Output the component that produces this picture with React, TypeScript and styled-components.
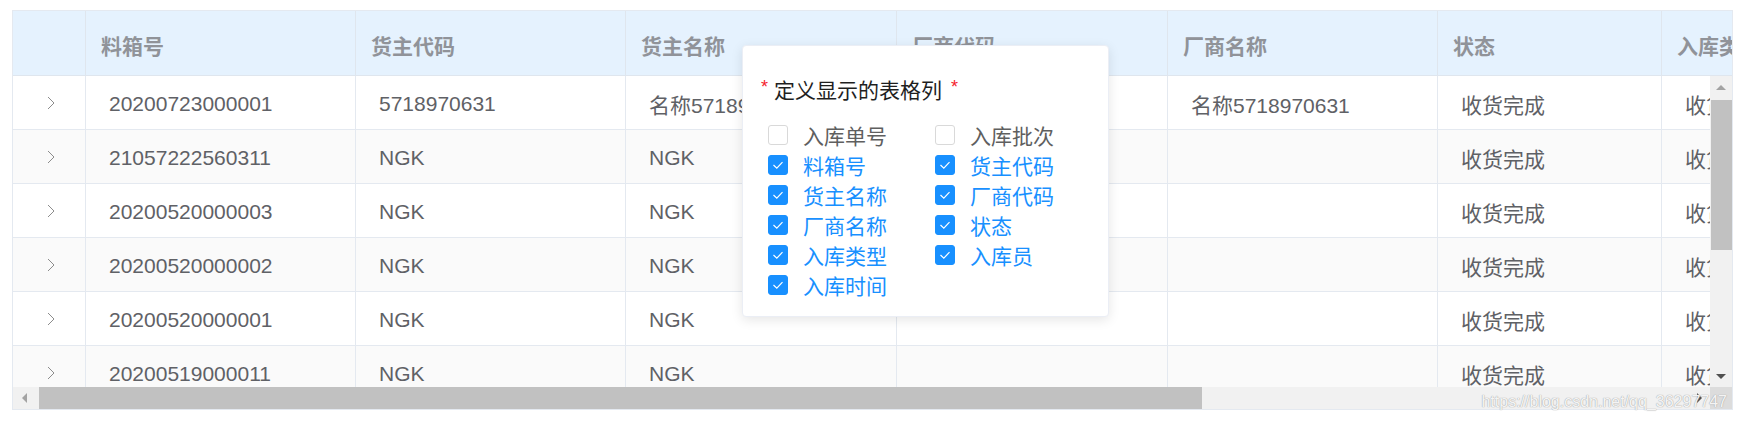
import React from "react";
import styled, { createGlobalStyle } from "styled-components";

type Column = { key: string; title: string; width: number };
type RowData = Record<string, string>;

const columns: Column[] = [
  { key: "box", title: "料箱号", width: 270 },
  { key: "ownerCode", title: "货主代码", width: 270 },
  { key: "ownerName", title: "货主名称", width: 271 },
  { key: "vendorCode", title: "厂商代码", width: 271 },
  { key: "vendorName", title: "厂商名称", width: 270 },
  { key: "status", title: "状态", width: 224 },
  { key: "type", title: "入库类型", width: 270 },
  { key: "user", title: "入库员", width: 200 },
  { key: "time", title: "入库时间", width: 260 },
];

const rows: RowData[] = [
  {
    box: "20200723000001",
    ownerCode: "5718970631",
    ownerName: "名称5718970631",
    vendorCode: "5718970631",
    vendorName: "名称5718970631",
    status: "收货完成",
    type: "收货入库",
  },
  { box: "21057222560311", ownerCode: "NGK", ownerName: "NGK", status: "收货完成", type: "收货入库" },
  { box: "20200520000003", ownerCode: "NGK", ownerName: "NGK", status: "收货完成", type: "收货入库" },
  { box: "20200520000002", ownerCode: "NGK", ownerName: "NGK", status: "收货完成", type: "收货入库" },
  { box: "20200520000001", ownerCode: "NGK", ownerName: "NGK", status: "收货完成", type: "收货入库" },
  { box: "20200519000011", ownerCode: "NGK", ownerName: "NGK", status: "收货完成", type: "收货入库" },
];

const options = [
  { label: "入库单号", checked: false },
  { label: "入库批次", checked: false },
  { label: "料箱号", checked: true },
  { label: "货主代码", checked: true },
  { label: "货主名称", checked: true },
  { label: "厂商代码", checked: true },
  { label: "厂商名称", checked: true },
  { label: "状态", checked: true },
  { label: "入库类型", checked: true },
  { label: "入库员", checked: true },
  { label: "入库时间", checked: true },
];

const App = () => {
  return (
    <Page>
      <GlobalStyle />
      <TableFrame>
        <HeaderRow>
          <ExpandHead />
          {columns.map((col) => (
            <HeadCell key={col.key} w={col.width}>
              {col.title}
            </HeadCell>
          ))}
        </HeaderRow>

        <BodyArea>
          <BodyViewport>
            {rows.map((row, i) => (
              <BodyRow key={row.box} striped={i % 2 === 1}>
                <ExpandCell>
                  <svg width="8" height="14" viewBox="0 0 8 14">
                    <polyline
                      points="1,1 7,7 1,13"
                      fill="none"
                      stroke="#8c8c8c"
                      strokeWidth="1"
                    />
                  </svg>
                </ExpandCell>
                {columns.map((col) => (
                  <Cell key={col.key} w={col.width}>
                    {row[col.key] || ""}
                  </Cell>
                ))}
              </BodyRow>
            ))}
          </BodyViewport>

          {/* 세로 스크롤바 */}
          <VScroll>
            <ScrollBtn>
              <Arrow dir="up" active={false} />
            </ScrollBtn>
            <VThumb />
            <ScrollTrack />
            <ScrollBtn>
              <Arrow dir="down" active />
            </ScrollBtn>
          </VScroll>
        </BodyArea>

        {/* 가로 스크롤바 */}
        <HScroll>
          <ScrollBtn>
            <Arrow dir="left" active={false} />
          </ScrollBtn>
          <HThumb />
          <ScrollTrack />
          <ScrollBtn>
            <Arrow dir="right" active />
          </ScrollBtn>
          <ScrollCorner />
        </HScroll>
      </TableFrame>

      <Popover>
        <PopTitle>
          <Star>*</Star>定义显示的表格列<Star second>*</Star>
        </PopTitle>
        <OptionGrid>
          {options.map((opt) => (
            <OptionItem key={opt.label} checked={opt.checked}>
              <CheckBox checked={opt.checked}>
                {opt.checked ? (
                  <svg width="20" height="20" viewBox="0 0 20 20">
                    <polyline
                      points="5.5,10 8.8,13.2 14.5,7.2"
                      fill="none"
                      stroke="#fff"
                      strokeWidth="1.2"
                    />
                  </svg>
                ) : null}
              </CheckBox>
              {opt.label}
            </OptionItem>
          ))}
        </OptionGrid>
      </Popover>

      <Watermark>https://blog.csdn.net/qq_36297747</Watermark>
    </Page>
  );
};

export default App;

const GlobalStyle = createGlobalStyle`
  html, body {
    margin: 0;
    padding: 0;
    background: #fff;
  }
  body {
    font-family: "Liberation Sans", "Noto Sans CJK SC", sans-serif;
  }
  * {
    box-sizing: border-box;
  }
`;

const Page = styled.div`
  position: relative;
  width: 1740px;
  height: 421px;
  padding: 10px 0 0 12px;
  overflow: hidden;
`;

const TableFrame = styled.div`
  width: 1721px;
  height: 400px;
  border: 1px solid #e4e9f0;
  display: flex;
  flex-direction: column;
  overflow: hidden;
  background: #fff;
`;

const HeaderRow = styled.div`
  display: flex;
  flex-shrink: 0;
  height: 65px;
  background: #e5f2fe;
  border-bottom: 1px solid #dfe6ee;
`;

const ExpandHead = styled.div`
  width: 73px;
  flex-shrink: 0;
  border-right: 1px solid #dfe6ee;
`;

const HeadCell = styled.div<{ w: number }>`
  width: ${(p) => p.w}px;
  flex-shrink: 0;
  display: flex;
  align-items: center;
  padding: 3px 0 0 15px;
  border-right: 1px solid #dfe6ee;
  font-size: 21px;
  font-weight: bold;
  color: #909399;
  white-space: nowrap;
  overflow: hidden;
`;

const BodyArea = styled.div`
  display: flex;
  height: 311px;
  flex-shrink: 0;
`;

const BodyViewport = styled.div`
  flex: 1;
  overflow: hidden;
`;

const BodyRow = styled.div<{ striped: boolean }>`
  display: flex;
  height: 54px;
  background: ${(p) => (p.striped ? "#fafafa" : "#fff")};
  border-bottom: 1px solid #e4e9f0;
`;

const ExpandCell = styled.div`
  width: 73px;
  flex-shrink: 0;
  display: flex;
  align-items: center;
  justify-content: center;
  padding-left: 4px;
  border-right: 1px solid #e4e9f0;
`;

const Cell = styled.div<{ w: number }>`
  width: ${(p) => p.w}px;
  flex-shrink: 0;
  display: flex;
  align-items: center;
  padding: 2px 0 0 23px;
  border-right: 1px solid #e4e9f0;
  font-size: 21px;
  color: #5f6166;
  white-space: nowrap;
  overflow: hidden;
`;

const VScroll = styled.div`
  width: 22px;
  flex-shrink: 0;
  display: flex;
  flex-direction: column;
  background: #f1f1f1;
`;

const HScroll = styled.div`
  display: flex;
  height: 22px;
  flex-shrink: 0;
  background: #f1f1f1;
`;

const ScrollBtn = styled.div`
  width: 22px;
  height: 22px;
  flex-shrink: 0;
  display: flex;
  align-items: center;
  justify-content: center;
`;

const ScrollTrack = styled.div`
  flex: 1;
`;

const VThumb = styled.div`
  height: 150px;
  margin: 2px 0 0 1px;
  width: 21px;
  background: #c1c1c1;
`;

const HThumb = styled.div`
  width: 1163px;
  margin-left: 4px;
  background: #c1c1c1;
`;

const ScrollCorner = styled.div`
  width: 22px;
  flex-shrink: 0;
  background: #dcdcdc;
`;

const Arrow = styled.span<{ dir: "up" | "down" | "left" | "right"; active: boolean }>`
  width: 0;
  height: 0;
  border-style: solid;
  ${(p) => {
    const c = p.active ? "#505050" : "#a3a3a3";
    if (p.dir === "up") return `border-width: 0 5px 5px 5px; border-color: transparent transparent ${c} transparent;`;
    if (p.dir === "down") return `border-width: 5px 5px 0 5px; border-color: ${c} transparent transparent transparent;`;
    if (p.dir === "left") return `border-width: 5px 5px 5px 0; border-color: transparent ${c} transparent transparent;`;
    return `border-width: 5px 0 5px 5px; border-color: transparent transparent transparent ${c};`;
  }}
`;

const Popover = styled.div`
  position: absolute;
  left: 742px;
  top: 45px;
  width: 367px;
  height: 272px;
  padding: 28px 18px 0 18px;
  background: #fff;
  border: 1px solid #ebeef5;
  border-radius: 4px;
  box-shadow: 0 3px 12px 0 rgba(0, 0, 0, 0.1);
`;

const PopTitle = styled.div`
  display: flex;
  align-items: center;
  height: 30px;
  font-size: 21px;
  color: #1f1f1f;
  white-space: nowrap;
`;

const Star = styled.span<{ second?: boolean }>`
  color: #f5222d;
  font-size: 18px;
  margin: ${(p) => (p.second ? "0 0 0 9px" : "0 6px 0 0")};
  position: relative;
  top: -2px;
`;

const OptionGrid = styled.div`
  display: grid;
  grid-template-columns: 167px 160px;
  grid-auto-rows: 30px;
  margin: 16px 0 0 7px;
`;

const OptionItem = styled.div<{ checked: boolean }>`
  display: flex;
  align-items: center;
  font-size: 21px;
  color: ${(p) => (p.checked ? "#1890ff" : "#5f5f5f")};
  white-space: nowrap;
`;

const CheckBox = styled.span<{ checked: boolean }>`
  width: 20px;
  height: 20px;
  flex-shrink: 0;
  margin-right: 15px;
  border-radius: 3px;
  border: 1px solid ${(p) => (p.checked ? "#1890ff" : "#d9d9d9")};
  background: ${(p) => (p.checked ? "#1890ff" : "#fff")};
  display: flex;
  align-items: center;
  justify-content: center;
  overflow: hidden;

  svg {
    flex-shrink: 0;
  }
`;

const Watermark = styled.div`
  position: absolute;
  right: 13px;
  top: 393px;
  font-family: "Liberation Sans", sans-serif;
  font-size: 16px;
  line-height: 18px;
  color: rgba(255, 255, 255, 0.9);
  text-shadow: 0 0 1px #a8a8a8, 0 0 1px #a8a8a8;
  pointer-events: none;
`;
